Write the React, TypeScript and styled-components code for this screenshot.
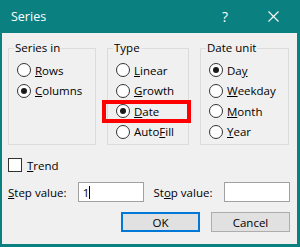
import React from 'react';
import styled, { createGlobalStyle } from 'styled-components';

const GlobalStyle = createGlobalStyle`
  html, body {
    margin: 0;
    padding: 0;
  }

  body {
    font-family: "Open Sans", "Liberation Sans", sans-serif;
    font-size: 11.5px;
    color: #000000;
  }
`;

const Window = styled.div`
  position: relative;
  display: flex;
  flex-direction: column;
  width: 300px;
  height: 247px;
  box-sizing: border-box;
  padding: 0 3px 3px 2px;
  background-color: #0b8080;
`;

const TitleBar = styled.div`
  display: flex;
  align-items: center;
  height: 33px;
  padding-left: 9px;
  color: #ffffff;
`;

const Title = styled.span`
  flex: 1;
  font-size: 12.5px;
`;

const TitleButton = styled.div`
  display: flex;
  justify-content: center;
  align-items: center;
  width: 48px;
  height: 33px;
  font-size: 14px;
`;

const Body = styled.div`
  flex: 1;
  display: flex;
  flex-direction: column;
  padding: 7px 7px 0 6px;
  background-color: #f0f0f0;
`;

const GroupsRow = styled.div`
  display: flex;
  gap: 11px;
  height: 105px;
`;

const GroupBox = styled.fieldset<{ $width: number }>`
  width: ${(p) => p.$width}px;
  box-sizing: border-box;
  margin: 0;
  padding: 4px 0 2px 8px;
  border: 1px solid #dcdcdc;
`;

const Legend = styled.legend`
  margin-left: -3px;
  padding: 0 1px;
  line-height: 16px;
`;

const Option = styled.div`
  display: flex;
  align-items: center;
  gap: 4px;
  height: 20.5px;
  white-space: nowrap;
`;

const Radio = styled.span<{ $checked?: boolean }>`
  display: flex;
  justify-content: center;
  align-items: center;
  width: 14px;
  height: 14px;
  box-sizing: border-box;
  border: 1px solid #333333;
  border-radius: 50%;
  background-color: #ffffff;

  &::after {
    content: '';
    display: ${(p) => (p.$checked ? 'block' : 'none')};
    width: 6px;
    height: 6px;
    border-radius: 50%;
    background-color: #1a1a1a;
  }
`;

const CheckRow = styled.div`
  display: flex;
  align-items: center;
  gap: 5px;
  height: 20px;
  margin-top: 10px;
  padding-left: 0;
`;

const CheckBox = styled.span`
  width: 14px;
  height: 14px;
  box-sizing: border-box;
  border: 1px solid #333333;
  background-color: #ffffff;
`;

const ValueRow = styled.div`
  display: flex;
  align-items: center;
  height: 20px;
  margin-top: 7px;
`;

const FieldLabel = styled.span<{ $width: number }>`
  width: ${(p) => p.$width}px;
`;

const TextBox = styled.div<{ $gap?: number }>`
  display: flex;
  align-items: center;
  width: 66px;
  height: 20px;
  box-sizing: border-box;
  margin-right: ${(p) => p.$gap || 0}px;
  padding-left: 4px;
  border: 1px solid #a0a0a0;
  background-color: #ffffff;
`;

const Caret = styled.span`
  width: 1px;
  height: 13px;
  background-color: #000000;
`;

const ButtonRow = styled.div`
  display: flex;
  justify-content: flex-end;
  gap: 11px;
  margin-top: 10px;
`;

const DialogButton = styled.button<{ $default?: boolean }>`
  width: 79px;
  height: 20px;
  box-sizing: border-box;
  padding: 0;
  font-family: inherit;
  font-size: 11.5px;
  color: #000000;
  background-color: #e1e1e1;
  border: 1px solid ${(p) => (p.$default ? '#0078d7' : '#adadad')};
  box-shadow: ${(p) => (p.$default ? 'inset 0 0 0 1px #0078d7' : 'none')};
`;

const Highlight = styled.div`
  position: absolute;
  left: 102px;
  top: 100px;
  width: 89px;
  height: 23px;
  box-sizing: border-box;
  border: 4px solid #ff0000;
  pointer-events: none;
`;

const CloseIcon = () => (
  <svg width="11" height="11" viewBox="0 0 11 11">
    <path d="M0.5 0.5 L10.5 10.5 M10.5 0.5 L0.5 10.5" stroke="#ffffff" strokeWidth="1.1" />
  </svg>
);

const App = (): JSX.Element => {
  return (
    <>
      <GlobalStyle />
      <Window>
        <TitleBar>
          <Title>Series</Title>
          <TitleButton>?</TitleButton>
          <TitleButton>
            <CloseIcon />
          </TitleButton>
        </TitleBar>
        <Body>
          <GroupsRow>
            <GroupBox $width={88}>
              <Legend>Series in</Legend>
              <Option>
                <Radio />
                <span><u>R</u>ows</span>
              </Option>
              <Option>
                <Radio $checked />
                <span><u>C</u>olumns</span>
              </Option>
            </GroupBox>
            <GroupBox $width={82}>
              <Legend>Type</Legend>
              <Option>
                <Radio />
                <span><u>L</u>inear</span>
              </Option>
              <Option>
                <Radio />
                <span><u>G</u>rowth</span>
              </Option>
              <Option>
                <Radio $checked />
                <span><u>D</u>ate</span>
              </Option>
              <Option>
                <Radio />
                <span>Auto<u>F</u>ill</span>
              </Option>
            </GroupBox>
            <GroupBox $width={89}>
              <Legend>Date unit</Legend>
              <Option>
                <Radio $checked />
                <span>Da<u>y</u></span>
              </Option>
              <Option>
                <Radio />
                <span><u>W</u>eekday</span>
              </Option>
              <Option>
                <Radio />
                <span><u>M</u>onth</span>
              </Option>
              <Option>
                <Radio />
                <span><u>Y</u>ear</span>
              </Option>
            </GroupBox>
          </GroupsRow>
          <CheckRow>
            <CheckBox />
            <span><u>T</u>rend</span>
          </CheckRow>
          <ValueRow>
            <FieldLabel $width={70}><u>S</u>tep value:</FieldLabel>
            <TextBox $gap={10}>
              1
              <Caret />
            </TextBox>
            <FieldLabel $width={71}>St<u>o</u>p value:</FieldLabel>
            <TextBox />
          </ValueRow>
          <ButtonRow>
            <DialogButton $default>OK</DialogButton>
            <DialogButton>Cancel</DialogButton>
          </ButtonRow>
        </Body>
        <Highlight />
      </Window>
    </>
  );
};

export default App;
